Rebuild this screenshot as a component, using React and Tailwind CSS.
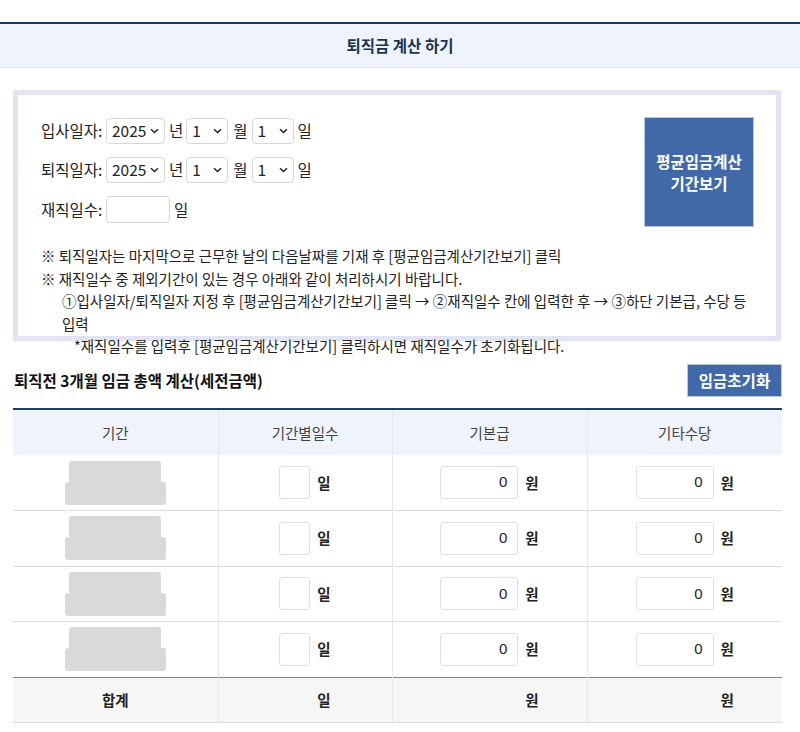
import React from 'react';

const Chevron = () => (
  <svg width="9" height="6" viewBox="0 0 9 6" className="shrink-0">
    <path d="M1 1.2l3.5 3.3L8 1.2" fill="none" stroke="#222" strokeWidth="1.5" />
  </svg>
);

const FakeSelect = ({ value, className }) => (
  <div className={`flex h-[26px] items-center justify-between rounded-[4px] border border-[#d6d6d6] bg-white pl-[5px] pr-[5px] ${className}`}>
    <span>{value}</span>
    <Chevron />
  </div>
);

const DateRow = ({ label }) => (
  <div className="flex h-[26px] items-center">
    <span className="w-[65px]">{label}</span>
    <FakeSelect value="2025" className="w-[59px]" />
    <span className="ml-[4px]">년</span>
    <FakeSelect value="1" className="ml-[3px] w-[42px]" />
    <span className="ml-[5px]">월</span>
    <FakeSelect value="1" className="ml-[4px] w-[42px]" />
    <span className="ml-[4px]">일</span>
  </div>
);

const Blurred = () => (
  <div className="flex flex-col items-center">
    <div className="h-[21px] w-[92px] rounded-t-[3px] bg-[#d9d9d9]" />
    <div className="h-[23px] w-[101px] rounded-[3px] bg-[#d9d9d9]" />
  </div>
);

const Cell = ({ w, unit, value }) => (
  <div className="flex items-center justify-center gap-[7px]">
    <div className={`flex h-[33px] items-center justify-end rounded-[3px] border border-[#e0e0e0] bg-white pr-[10px] font-['Liberation_Sans',sans-serif] text-[15px] text-[#222] ${w}`}>
      {value}
    </div>
    <span className="font-semibold text-[#222]">{unit}</span>
  </div>
);

const FootCell = ({ w, unit }) => (
  <div className="flex items-center justify-center gap-[7px]">
    <div className={`h-[33px] ${w}`} />
    <span className="font-semibold text-[#222]">{unit}</span>
  </div>
);

export default function App() {
  const rows = [0, 1, 2, 3];
  return (
    <div className="min-h-[732px] bg-white pt-[22px] font-['Noto_Sans_CJK_KR','Noto_Sans',sans-serif] text-[15.5px] text-[#222]">
      <div className="flex h-[46px] items-center justify-center border-t-2 border-b border-t-[#173a5e] border-b-[#e6e6e6] bg-[#eff3fb]">
        <h1 className="text-[15.5px] font-bold text-[#1c3350]">퇴직금 계산 하기</h1>
      </div>

      <div className="px-[13px] pt-[22px]">
        <div className="h-[251px] w-[768px] border-[5px] border-[#e0e5f1] bg-white">
          <div className="flex justify-between pl-[23px] pr-[22px] pt-[22px]">
            <div className="flex flex-col gap-[13px] pt-[1px]">
              <DateRow label="입사일자:" />
              <DateRow label="퇴직일자:" />
              <div className="flex h-[27px] items-center">
                <span className="w-[65px]">재직일수:</span>
                <div className="h-[27px] w-[64px] rounded-[4px] border border-[#d6d6d6] bg-white" />
                <span className="ml-[4px]">일</span>
              </div>
            </div>
            <button className="flex h-[110px] w-[110px] flex-col items-center justify-center border border-[#b9c7df] bg-[#4169a8] text-[15.5px] font-bold leading-[22px] text-white">
              <span>평균임금계산</span>
              <span>기간보기</span>
            </button>
          </div>

          <div className="mt-[18px] pl-[23px] text-[14.5px] leading-[22.5px] text-[#222]">
            <p>※ 퇴직일자는 마지막으로 근무한 날의 다음날짜를 기재 후 [평균임금계산기간보기] 클릭</p>
            <p>※ 재직일수 중 제외기간이 있는 경우 아래와 같이 처리하시기 바랍니다.</p>
            <p className="pl-[21px]">
              ①입사일자/퇴직일자 지정 후 [평균임금계산기간보기] 클릭 → ②재직일수 칸에 입력한 후 → ③하단 기본급, 수당 등
              <br />
              입력
            </p>
            <p className="pl-[33px]">*재직일수를 입력후 [평균임금계산기간보기] 클릭하시면 재직일수가 초기화됩니다.</p>
          </div>
        </div>

        <div className="mt-[23px] flex h-[33px] w-[769px] items-center justify-between">
          <h2 className="pl-[1px] text-[15.5px] font-bold text-[#111]">퇴직전 3개월 임금 총액 계산(세전금액)</h2>
          <button className="h-[33px] w-[95px] border border-[#b9c7df] bg-[#4169a8] text-[15.5px] font-bold text-white">
            임금초기화
          </button>
        </div>

        <table className="mt-[11px] w-[769px] table-fixed border-collapse text-[14.5px]">
          <colgroup>
            <col className="w-[205px]" />
            <col className="w-[174px]" />
            <col className="w-[195px]" />
            <col className="w-[195px]" />
          </colgroup>
          <thead>
            <tr className="h-[46px] border-t-2 border-t-[#1d4063] bg-[#eff3fb] text-[#444]">
              <th className="border-r border-[#e3e7ee] font-normal">기간</th>
              <th className="border-r border-[#e3e7ee] font-normal">기간별일수</th>
              <th className="border-r border-[#e3e7ee] font-normal">기본급</th>
              <th className="font-normal">기타수당</th>
            </tr>
          </thead>
          <tbody>
            {rows.map((r) => (
              <tr key={r} className="h-[55.5px] border-b border-[#dcdcdc] last:border-b-0">
                <td className="border-r border-[#e8e8e8]">
                  <Blurred />
                </td>
                <td className="border-r border-[#e8e8e8]">
                  <Cell w="w-[31px]" unit="일" value="" />
                </td>
                <td className="border-r border-[#e8e8e8]">
                  <Cell w="w-[78px]" unit="원" value="0" />
                </td>
                <td>
                  <Cell w="w-[78px]" unit="원" value="0" />
                </td>
              </tr>
            ))}
          </tbody>
          <tfoot>
            <tr className="h-[45px] border-t border-b border-t-[#7489a5] border-b-[#dcdcdc] bg-[#f6f6f6]">
              <td className="border-r border-[#e8e8e8] text-center font-semibold">합계</td>
              <td className="border-r border-[#e8e8e8]">
                <FootCell w="w-[31px]" unit="일" />
              </td>
              <td className="border-r border-[#e8e8e8]">
                <FootCell w="w-[78px]" unit="원" />
              </td>
              <td>
                <FootCell w="w-[78px]" unit="원" />
              </td>
            </tr>
          </tfoot>
        </table>
      </div>
    </div>
  );
}
